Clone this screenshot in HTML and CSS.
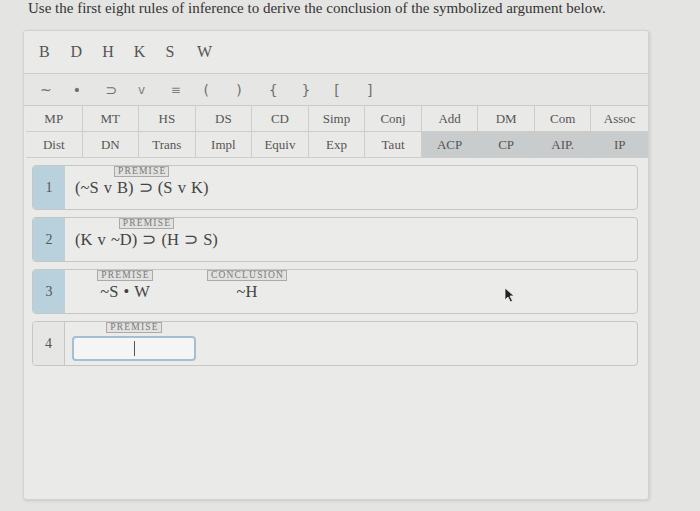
FILE: index.html
```html
<!DOCTYPE html>
<html>
<head>
<meta charset="utf-8">
<link rel="stylesheet" href="styles.css">
</head>
<body>
<p class="title">Use the first eight rules of inference to derive the conclusion of the symbolized argument below.</p>
<div class="panel">
  <div class="vars">
    <span>B</span><span>D</span><span>H</span><span>K</span><span>S</span><span>W</span>
  </div>
  <div class="ops">
    <span>~</span><span class="dot">•</span><span>⊃</span><span class="small">v</span><span class="small">≡</span><span>(</span><span>)</span><span>{</span><span>}</span><span>[</span><span>]</span>
  </div>
  <div class="rules">
    <div class="rule">MP</div><div class="rule">MT</div><div class="rule">HS</div><div class="rule">DS</div><div class="rule">CD</div><div class="rule">Simp</div><div class="rule">Conj</div><div class="rule">Add</div><div class="rule">DM</div><div class="rule">Com</div><div class="rule">Assoc</div>
    <div class="rule">Dist</div><div class="rule">DN</div><div class="rule">Trans</div><div class="rule">Impl</div><div class="rule">Equiv</div><div class="rule">Exp</div><div class="rule">Taut</div><div class="rule dark">ACP</div><div class="rule dark">CP</div><div class="rule dark">AIP.</div><div class="rule dark">IP</div>
  </div>
  <div class="lines">
    <div class="line">
      <div class="num given">1</div>
      <div class="body">
        <div class="stmt"><span class="tag">Premise</span><span class="f">(~S v B) ⊃ (S v K)</span></div>
      </div>
    </div>
    <div class="line">
      <div class="num given">2</div>
      <div class="body">
        <div class="stmt"><span class="tag">Premise</span><span class="f">(K v ~D) ⊃ (H ⊃ S)</span></div>
      </div>
    </div>
    <div class="line">
      <div class="num given">3</div>
      <div class="body">
        <div class="stmt"><span class="tag">Premise</span><span class="f">~S • W</span></div>
        <div class="stmt concl"><span class="tag">Conclusion</span><span class="f">~H</span></div>
      </div>
      <svg class="pointer" width="12" height="16" viewBox="0 0 12 16"><path d="M1 1 L1 13 L4 10 L6.5 15 L8.5 14 L6 9 L10 9 Z" fill="#222" stroke="#eee" stroke-width="0.8"/></svg>
    </div>
    <div class="line">
      <div class="num">4</div>
      <div class="body">
        <div class="stmt input-stmt"><span class="tag">Premise</span><span class="input"><span class="caret"></span></span></div>
      </div>
    </div>
  </div>
</div>
</body>
</html>
```
FILE: styles.css
```css
html, body {
  margin: 0;
  padding: 0;
}
body {
  width: 700px;
  height: 511px;
  background: #e4e4e2;
  font-family: "Liberation Serif", "Times New Roman", serif;
  color: #555;
  overflow: hidden;
}
.title {
  margin: 0;
  padding: 0 0 0 28px;
  height: 28px;
  font-size: 15px;
  line-height: 16px;
  color: #333;
}
.panel {
  margin-left: 23px;
  width: 626px;
  height: 470px;
  margin-top: 2px;
  background: #eaeae8;
  border: 1px solid #d2d2d0;
  border-radius: 3px;
  box-shadow: 1px 1px 3px rgba(0,0,0,0.12);
  box-sizing: border-box;
}
.vars {
  height: 42px;
  display: flex;
  align-items: center;
  padding-left: 15px;
  border-bottom: 1px solid #cbcbc9;
  font-size: 16px;
  color: #555;
}
.vars span {
  width: 31.6px;
  text-align: left;
}
.ops {
  height: 31px;
  display: flex;
  align-items: center;
  padding-left: 16px;
  border-bottom: 1px solid #cbcbc9;
  background: #e6e6e4;
  color: #707070;
  font-family: "DejaVu Sans", sans-serif;
}
.ops span {
  width: 32.7px;
  font-size: 14px;
}
.ops .small {
  font-size: 12px;
  color: #808080;
}
.ops .dot {
  font-size: 14px;
}
.rules {
  display: grid;
  grid-template-columns: repeat(11, 1fr);
  margin-left: 2px;
}
.rule {
  height: 26px;
  display: flex;
  align-items: center;
  justify-content: center;
  font-size: 13px;
  color: #555;
  border-right: 1px solid #cdcdcb;
  border-bottom: 1px solid #cdcdcb;
  background: #e9e9e7;
  box-sizing: border-box;
}
.rule:nth-child(11n) {
  border-right: none;
}
.rule.dark {
  background: #c9cccd;
}
.lines {
  padding: 7px 10px 0 8px;
  display: flex;
  flex-direction: column;
  gap: 7px;
}
.line {
  height: 45px;
  display: flex;
  border: 1px solid #c6c6c4;
  border-radius: 4px;
  background: #ebebe9;
  position: relative;
  box-sizing: border-box;
}
.num {
  width: 32px;
  display: flex;
  align-items: center;
  justify-content: center;
  font-size: 14px;
  color: #555;
  border-right: 1px solid #c6c6c4;
  border-radius: 3px 0 0 3px;
  background: #e6e6e4;
  box-sizing: border-box;
}
.num.given {
  background: #b8d1dc;
  border-right: none;
}
.body {
  display: flex;
  align-items: flex-start;
  padding-left: 10px;
  padding-top: 0;
}
.stmt {
  display: flex;
  flex-direction: column;
  align-items: center;
  min-width: 100px;
}
.stmt.concl {
  margin-left: 22px;
}
.tag {
  font-size: 9.5px;
  line-height: 9px;
  text-transform: uppercase;
  letter-spacing: 1.2px;
  padding: 0 2px 0 3px;
  border: 1px solid #aaa;
  background: #e2e2e0;
  color: #7a7a7a;
}
.f {
  font-size: 16.5px;
  line-height: 18px;
  margin-top: 2px;
  color: #444;
  white-space: pre;
  word-spacing: 1px;
}
.input-stmt {
  min-width: 124px;
  margin-left: -3px;
}
.input {
  width: 124px;
  height: 25px;
  margin-top: 3px;
  border: 2px solid #a4bfd3;
  border-radius: 4px;
  background: #f4f5f4;
  box-sizing: border-box;
  display: flex;
  align-items: center;
  justify-content: center;
}
.caret {
  width: 1px;
  height: 15px;
  background: #555;
}
.pointer {
  position: absolute;
  left: 471px;
  top: 17px;
}
```
